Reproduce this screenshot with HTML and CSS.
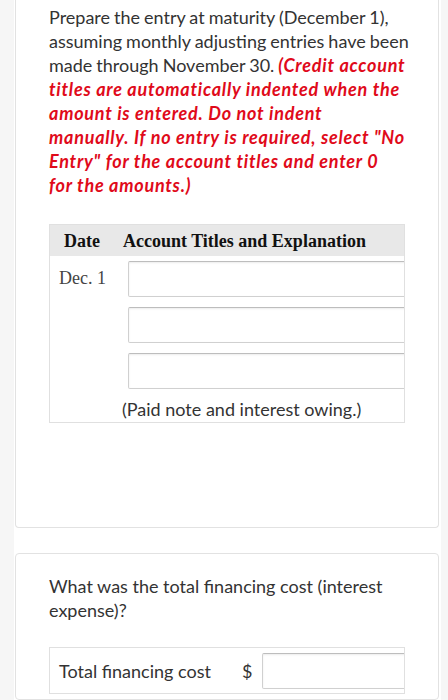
FILE: index.html
```html
<!DOCTYPE html>
<html>
<head>
<meta charset="utf-8">
<link rel="stylesheet" href="styles.css">
</head>
<body>
<div class="column">
  <section class="card card-first">
    <p class="prompt">Prepare the entry at maturity (December 1),<br>assuming monthly adjusting entries have been<br>made through November 30. <em class="note">(Credit account<br>titles are automatically indented when the<br>amount is entered. Do not indent<br>manually. If no entry is required, select "No<br>Entry" for the account titles and enter 0<br>for the amounts.)</em></p>
    <div class="journal">
      <div class="journal-head">
        <div class="h-date">Date</div>
        <div class="h-acct">Account Titles and Explanation</div>
      </div>
      <div class="journal-body">
        <div class="b-date">Dec. 1</div>
        <div class="b-acct">
          <div class="field"></div>
          <div class="field"></div>
          <div class="field"></div>
          <div class="explain">(Paid note and interest owing.)</div>
        </div>
      </div>
    </div>
  </section>
  <section class="card card-second">
    <p class="prompt">What was the total financing cost (interest expense)?</p>
    <div class="cost-row">
      <div class="cost-label">Total financing cost</div>
      <div class="cost-sign">$</div>
      <div class="field cost-field"></div>
    </div>
  </section>
</div>
</body>
</html>
```

FILE: styles.css
```css
html, body {
  margin: 0;
  padding: 0;
  background: #f6f6f6;
  height: 700px;
  overflow: hidden;
}
.column {
  margin-left: 14px;
  width: 427px;
  background: #ffffff;
  height: 700px;
  display: flex;
  flex-direction: column;
  gap: 25px;
  font-family: Lato, "Open Sans", sans-serif;
  font-size: 18px;
  line-height: 24px;
  color: #333333;
}
.card {
  margin: 0 2px 0 1px;
  border: 1px solid #e2e2e2;
  border-radius: 4px;
  background: #ffffff;
  padding: 0 33px;
}
.card-first {
  border-top: 0;
  border-top-left-radius: 0;
  border-top-right-radius: 0;
  padding-top: 5px;
  height: 528px;
  box-sizing: border-box;
  flex: none;
}
.card-second {
  padding-top: 20px;
  flex: 1;
}
.prompt {
  margin: 0;
}
.card-first .prompt {
  margin-right: -14px;
  white-space: nowrap;
  word-spacing: -0.6px;
}
.note {
  color: #e00a1a;
  font-weight: bold;
  font-style: italic;
  letter-spacing: 0.75px;
  word-spacing: 0;
}
.journal {
  margin-top: 27px;
  border: 1px solid #e0e0e0;
  overflow: hidden;
}
.journal-head {
  display: flex;
  background: #e8e8e8;
  height: 31px;
  align-items: center;
  font-family: "Liberation Serif", serif;
  font-weight: bold;
  color: #111111;
}
.h-date {
  width: 59px;
  padding-left: 14px;
}
.journal-body {
  display: flex;
  padding-top: 5px;
}
.b-date {
  width: 63px;
  padding-left: 9px;
  padding-top: 5px;
  font-family: "Liberation Serif", serif;
  color: #444444;
  flex: none;
}
.b-acct {
  display: flex;
  flex-direction: column;
  gap: 10px;
  flex: none;
}
.field {
  box-sizing: border-box;
  width: 300px;
  height: 36px;
  margin-left: 6px;
  border: 1px solid #d0d0d0;
  border-top-color: #bdbdbd;
  border-radius: 2px;
  background: #ffffff;
  box-shadow: inset 0 1px 2px rgba(0, 0, 0, 0.08);
  flex: none;
}
.explain {
  margin-top: -2px;
  padding-bottom: 1px;
}
.cost-row {
  margin-top: 25px;
  border: 1px solid #e0e0e0;
  height: 45px;
  display: flex;
  align-items: center;
  overflow: hidden;
}
.cost-label {
  width: 183px;
  padding-left: 9px;
  flex: none;
}
.cost-sign {
  width: 20px;
  flex: none;
}
.cost-field {
  margin-left: 0;
  width: 200px;
}
```
